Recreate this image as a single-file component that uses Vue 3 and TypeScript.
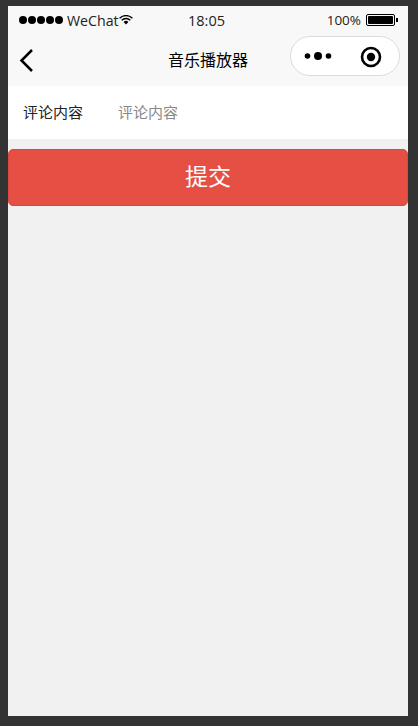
<script setup lang="ts">
const tabs: { label: string; active: boolean }[] = [
  { label: '评论内容', active: true },
  { label: '评论内容', active: false },
]
</script>

<template>
  <div class="shell">
    <div class="phone">
      <div class="status">
        <div class="status-left">
          <span class="dots"><i v-for="n in 5" :key="n"></i></span>
          <span class="carrier">WeChat</span>
          <svg class="wifi" width="14" height="10" viewBox="0 0 14 10">
            <path d="M0.6 3.2 A9.2 9.2 0 0 1 13.4 3.2" fill="none" stroke="#000" stroke-width="1.4" />
            <path d="M2.7 5.2 A6.2 6.2 0 0 1 11.3 5.2" fill="none" stroke="#000" stroke-width="1.4" />
            <path d="M4.6 7 L7 9.6 L9.4 7 A3.4 3.4 0 0 0 4.6 7 Z" fill="#000" />
          </svg>
        </div>
        <span class="time">18:05</span>
        <div class="status-right">
          <span class="pct">100%</span>
          <span class="battery"><b></b></span>
          <span class="nub"></span>
        </div>
      </div>
      <div class="nav">
        <svg class="back" width="16" height="23" viewBox="0 0 16 23">
          <path d="M14 1 L3.5 11.5 L14 22" fill="none" stroke="#000" stroke-width="2.5" />
        </svg>
        <span class="title">音乐播放器</span>
        <div class="capsule">
          <svg class="more" width="28" height="10" viewBox="0 0 28 10">
            <circle cx="3.5" cy="5" r="2.8" fill="#000" />
            <circle cx="14" cy="5" r="4" fill="#000" />
            <circle cx="24.5" cy="5" r="2.8" fill="#000" />
          </svg>
          <svg class="target" width="22" height="22" viewBox="0 0 22 22">
            <circle cx="11" cy="11" r="9" fill="none" stroke="#000" stroke-width="2.6" />
            <circle cx="11" cy="11" r="4.2" fill="#000" />
          </svg>
        </div>
      </div>
      <div class="tabs">
        <span v-for="(t, i) in tabs" :key="i" class="tab" :class="{ active: t.active }">{{ t.label }}</span>
      </div>
      <button class="submit" type="button">提交</button>
    </div>
  </div>
</template>

<style scoped>
.shell {
  width: 418px;
  height: 726px;
  box-sizing: border-box;
  padding: 6px 10px 10px 8px;
  background: #333333;
  font-family: "Open Sans", "Noto Sans CJK SC", sans-serif;
}
.phone {
  height: 100%;
  background: #f1f1f1;
  display: flex;
  flex-direction: column;
}
.status {
  height: 28px;
  background: #f8f8f8;
  display: grid;
  grid-template-columns: 1fr auto 1fr;
  align-items: center;
  padding: 0 10px 0 11px;
  font-size: 14px;
  color: #222;
}
.status-left,
.status-right {
  display: flex;
  align-items: center;
}
.status-right {
  justify-content: flex-end;
}
.dots {
  display: flex;
  gap: 1px;
  margin-right: 4px;
}
.dots i {
  width: 8px;
  height: 8px;
  border-radius: 50%;
  background: #000;
}
.carrier {
  font-size: 14.2px;
}
.wifi {
  margin-top: -1px;
}
.time {
  font-size: 14.5px;
  margin-right: 4px;
}
.pct {
  font-size: 13.5px;
  margin-right: 5px;
}
.battery {
  width: 29px;
  height: 12px;
  box-sizing: border-box;
  border: 1px solid #000;
  border-radius: 2px;
  padding: 1px;
  display: flex;
}
.battery b {
  flex: 1;
  background: #000;
  border-radius: 1px;
}
.nub {
  width: 2px;
  height: 4px;
  background: #000;
  margin-left: 1px;
}
.nav {
  height: 52px;
  box-sizing: border-box;
  background: #f8f8f8;
  display: grid;
  grid-template-columns: 1fr auto 1fr;
  align-items: start;
  padding: 2px 8px 0 10px;
}
.back {
  margin-top: 13px;
}
.title {
  margin: 14px 2px 0 0;
  font-size: 16px;
  color: #000;
  line-height: 20px;
}
.capsule {
  justify-self: end;
  width: 110px;
  height: 40px;
  box-sizing: border-box;
  border: 1px solid #dcdcdc;
  border-radius: 20px;
  background: #fff;
  display: flex;
  align-items: center;
  padding-left: 13px;
}
.more {
  margin-top: -1px;
}
.target {
  margin-left: 28px;
  margin-top: 2px;
}
.tabs {
  height: 53px;
  background: #fff;
  display: flex;
  align-items: center;
  gap: 35px;
  padding: 0 0 2px 15px;
  box-sizing: border-box;
}
.tab {
  font-size: 15px;
  color: #888;
  line-height: 20px;
}
.tab.active {
  color: #222;
}
.submit {
  margin: 10px 0 0;
  height: 57px;
  width: 100%;
  border: 1px solid #d9483c;
  border-radius: 5px;
  background: #e64f43;
  color: #fff;
  font-family: inherit;
  font-size: 23px;
  padding: 0 0 6px;
}
</style>

<style>
html,
body {
  margin: 0;
  background: #333333;
}
</style>
